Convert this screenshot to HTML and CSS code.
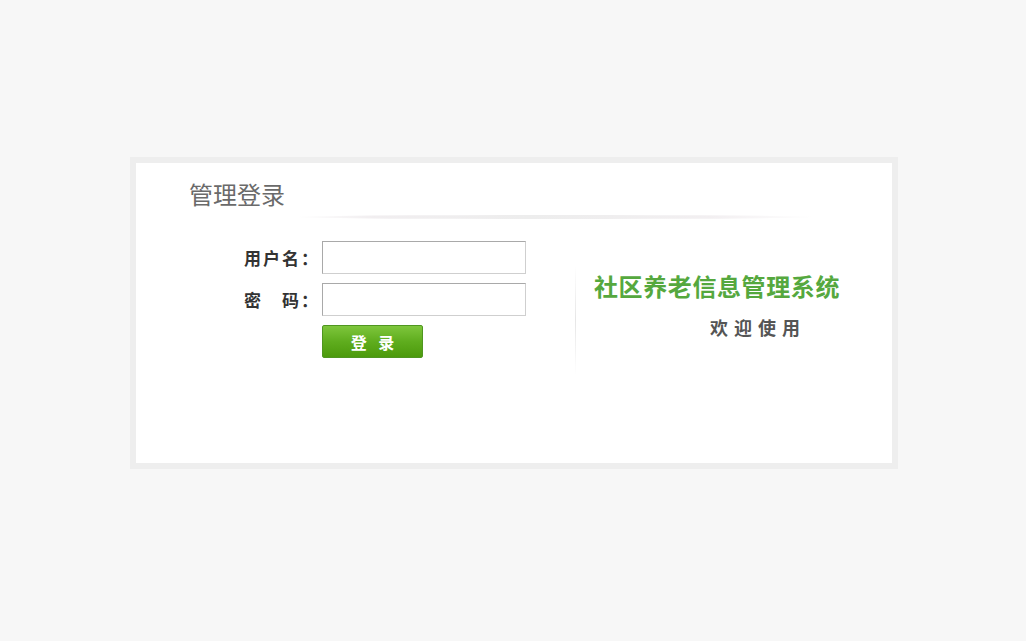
FILE: index.html
```html
<!DOCTYPE html>
<html lang="zh-CN">
<head>
<meta charset="utf-8">
<title>管理登录</title>
<link rel="stylesheet" href="styles.css">
</head>
<body>
<div class="page">
  <div class="box">
    <div class="header">
      <div class="title">管理登录</div>
      <div class="header-line"></div>
    </div>
    <div class="main">
      <form class="form">
        <label class="label" for="u">用户名：</label>
        <input class="input" id="u" type="text">
        <label class="label" for="p">密　码：</label>
        <input class="input" id="p" type="password">
        <span></span>
        <button class="btn" type="button">登 录</button>
      </form>
      <div class="side">
        <div class="sys">社区养老信息管理系统</div>
        <div class="welcome">欢迎使用</div>
      </div>
    </div>
  </div>
</div>
</body>
</html>
```
FILE: styles.css
```css
body {
  margin: 0;
  background: #f7f7f7;
  font-family: "Noto Sans CJK SC", "Noto Sans", sans-serif;
}
.page {
  padding: 157px 0 0 130px;
}
.box {
  width: 756px;
  height: 300px;
  border: 6px solid #eeeeee;
  background: #ffffff;
}
.header {
  display: flex;
  padding: 16px 0 0 53px;
  height: 30px;
}
.title {
  font-size: 24px;
  line-height: 30px;
  color: #6a6a6a;
}
.header-line {
  width: 520px;
  height: 4px;
  margin-left: 10px;
  align-self: flex-end;
  margin-bottom: -10px;
  background: linear-gradient(90deg, rgba(244,240,242,0), #f1eef0 15%, #ededed 45%, #f2eff1 80%, rgba(244,240,242,0));
  border-radius: 50%;
}
.main {
  display: flex;
  margin-top: 32px;
}
.form {
  display: grid;
  grid-template-columns: 92px 204px;
  grid-auto-rows: 33px;
  column-gap: 0;
  row-gap: 9px;
  margin: 0 0 0 94px;
}
.label {
  text-align: right;
  font-size: 17px;
  line-height: 33px;
  font-weight: 700;
  color: #333333;
  letter-spacing: 2px;
  padding-right: 2px;
  white-space: nowrap;
}
.input {
  box-sizing: border-box;
  width: 204px;
  height: 33px;
  margin: 0;
  border: 1px solid #cfcfcf;
  border-top-color: #a9a9a9;
  border-left-color: #a9a9a9;
  background: #fff;
  outline: none;
}
.btn {
  width: 101px;
  height: 33px;
  padding: 0;
  border: 1px solid #4f9620;
  border-radius: 2px;
  background: linear-gradient(#7ec63c, #5fad1e 50%, #4c9a0c);
  color: #ffffff;
  font-family: "Noto Sans CJK SC", sans-serif;
  font-size: 16px;
  font-weight: 700;
  letter-spacing: 4px;
  text-indent: 4px;
  cursor: pointer;
}
.side {
  margin: 24px 0 0 49px;
  height: 110px;
  padding-left: 19px;
  background: linear-gradient(rgba(232,232,232,0), #e6e6e6 50%, rgba(232,232,232,0)) left top / 1px 100% no-repeat;
}
.sys {
  margin-top: 6px;
  font-size: 24px;
  line-height: 30px;
  font-weight: 700;
  color: #55a83e;
  letter-spacing: 0.6px;
  white-space: nowrap;
}
.welcome {
  margin: 14px 0 0 116px;
  font-size: 18px;
  line-height: 24px;
  font-weight: 700;
  color: #555555;
  letter-spacing: 6px;
}
```
